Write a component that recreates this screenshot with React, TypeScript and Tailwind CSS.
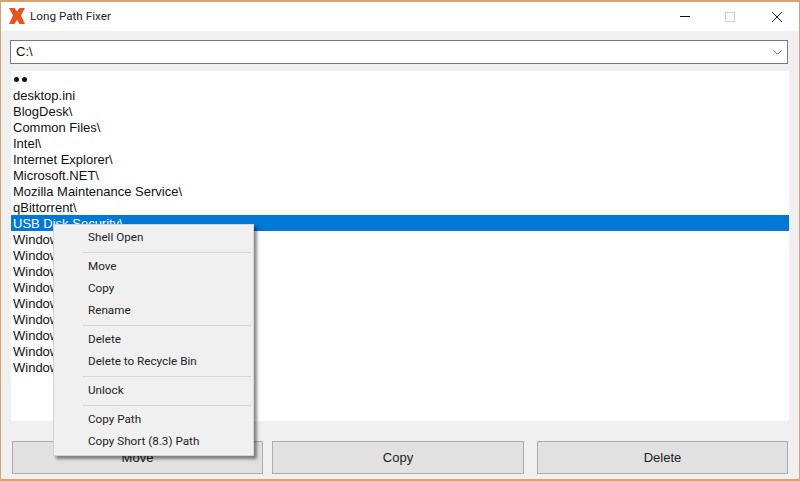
import React from "react";
import { ChevronDown } from "lucide-react";

const rows = [
  "desktop.ini",
  "BlogDesk\\",
  "Common Files\\",
  "Intel\\",
  "Internet Explorer\\",
  "Microsoft.NET\\",
  "Mozilla Maintenance Service\\",
  "qBittorrent\\",
  "USB Disk Security\\",
  "Windows Defender\\",
  "Windows Mail\\",
  "Windows Media Player\\",
  "Windows Multimedia Platform\\",
  "Windows NT\\",
  "Windows Photo Viewer\\",
  "Windows Portable Devices\\",
  "Windows Security\\",
  "WindowsPowerShell\\",
];

// null marks a separator
const menuItems: (string | null)[] = [
  "Shell Open",
  null,
  "Move",
  "Copy",
  "Rename",
  null,
  "Delete",
  "Delete to Recycle Bin",
  null,
  "Unlock",
  null,
  "Copy Path",
  "Copy Short (8.3) Path",
];

const ContextMenu = () => (
  <div className="absolute left-[52px] top-[222px] w-[201px] h-[232px] pt-[2px] bg-[#f0f0f0] border border-[#d4d4d4] shadow-[3px_3px_3px_rgba(0,0,0,0.45)] font-['Roboto',sans-serif] text-[11.7px] text-[#222]">
    {menuItems.map((item, i) =>
      item === null ? (
        <div key={i} className="h-[7px] ml-[29px] mr-[2px] flex items-center">
          <div className="h-px w-full bg-[#d7d7d7]" />
        </div>
      ) : (
        <div key={i} className="h-[22px] pl-[34px] flex items-center">
          {item}
        </div>
      ),
    )}
  </div>
);

const Button = ({ label, className }: { label: string; className: string }) => (
  <div
    className={`h-[33px] pt-px flex items-center justify-center bg-[#e1e1e1] border border-[#adadad] text-[13px] text-[#222] ${className}`}
  >
    {label}
  </div>
);

export default function App() {
  return (
    <div className="relative w-[800px] h-[481px] flex flex-col overflow-hidden bg-[#f0f0f0] border border-t-2 border-b-2 border-[#d9a273] font-['Liberation_Sans',sans-serif]">
      <div className="h-[29px] shrink-0 bg-white flex items-center">
        <svg width="16" height="16" viewBox="0 0 16 16" className="ml-[8px] -mt-[2px]">
          <path
            d="M0 0h5.500L8 3.500 10.500 0H16l-4 7.500 4 8.500h-5.500L8 12 5.500 16H0l4-8.500z"
            fill="#e8541c"
          />
        </svg>
        <span className="ml-[5px] font-['Roboto',sans-serif] text-[11.7px] text-[#222]">
          Long Path Fixer
        </span>
        <div className="ml-auto flex items-center">
          <div className="w-[10px] h-px bg-[#111] mr-[35px]" />
          <div className="w-[10px] h-[10px] border border-[#d0d0d0] mr-[36px]" />
          <svg width="12" height="12" viewBox="0 0 12 12" className="mr-[16px]">
            <path d="M1 1l10 10M11 1L1 11" stroke="#222" strokeWidth="1" />
          </svg>
        </div>
      </div>

      <div className="flex-1 min-h-0 flex flex-col pt-[9px] pl-[9px] pr-[10px]">
        <div className="h-[24px] shrink-0 mr-px flex items-center justify-between bg-white border border-[#7a7a7a] pl-[5px] pr-[2px] text-[13px] text-[#111]">
          <span>C:\</span>
          <ChevronDown size={15} strokeWidth={1.5} className="text-[#555]" />
        </div>

        <div className="mt-[7px] ml-px h-[350px] shrink-0 bg-white text-[13px] text-[#111] leading-[16px]">
          <div className="h-[16px] pl-[3px] pt-px flex items-center gap-[3px]">
            <span className="w-[5px] h-[5px] rounded-full bg-[#111]" />
            <span className="w-[5px] h-[5px] rounded-full bg-[#111]" />
          </div>
          {rows.map((row) => (
            <div
              key={row}
              className={`h-[16px] pl-[2px] pt-px ${
                row.startsWith("USB") ? "bg-[#0078d7] text-white" : ""
              }`}
            >
              {row}
            </div>
          ))}
        </div>

        <div className="mt-[20px] ml-[2px] flex">
          <Button label="Move" className="w-[251px]" />
          <Button label="Copy" className="w-[252px] ml-[9px]" />
          <Button label="Delete" className="w-[251px] ml-[13px]" />
        </div>
      </div>

      <ContextMenu />
    </div>
  );
}
